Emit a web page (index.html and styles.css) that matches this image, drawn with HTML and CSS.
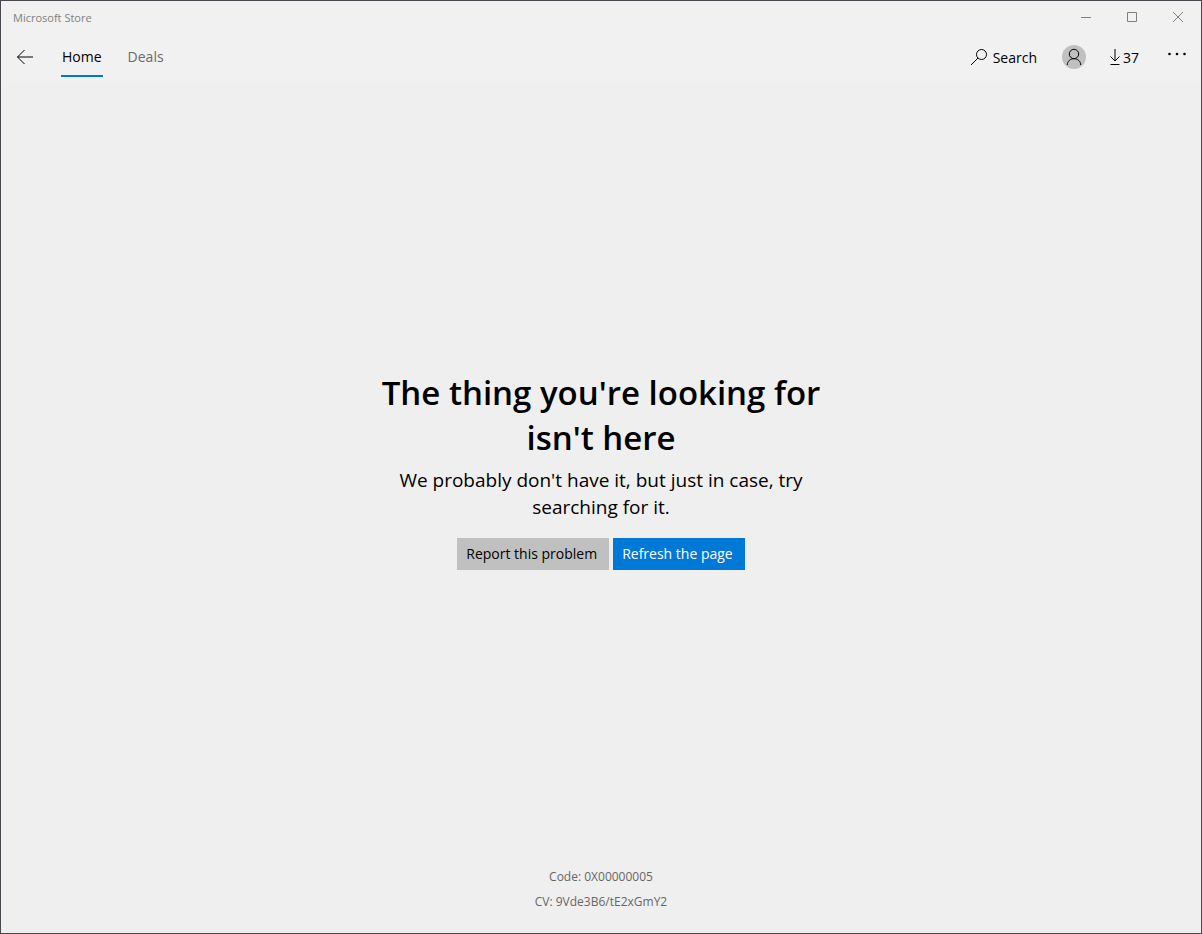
FILE: index.html
```html
<!DOCTYPE html>
<html lang="en">
<head>
<meta charset="utf-8">
<meta name="viewport" content="width=device-width, initial-scale=1">
<title>Microsoft Store</title>
<link rel="stylesheet" href="styles.css">
</head>
<body>
<div class="window">
  <header class="chrome">
    <div class="titlebar">
      <span class="app-name">Microsoft Store</span>
      <div class="window-controls">
        <button class="window-button" type="button" aria-label="Minimize">
          <svg width="12" height="12" viewBox="0 0 12 12"><path d="M1 6.500H11"/></svg>
        </button>
        <button class="window-button" type="button" aria-label="Maximize">
          <svg width="12" height="12" viewBox="0 0 12 12"><path d="M1.500 1.500H10.500V10.500H1.500Z"/></svg>
        </button>
        <button class="window-button" type="button" aria-label="Close">
          <svg width="12" height="12" viewBox="0 0 12 12"><path d="M1 1L11 11M11 1L1 11"/></svg>
        </button>
      </div>
    </div>
    <div class="toolbar">
      <button class="back" type="button" aria-label="Back">
        <svg width="18" height="16" viewBox="0 0 18 16"><path d="M17 8H1.500M8.500 1L1.500 8L8.500 15"/></svg>
      </button>
      <nav class="tabs">
        <a class="tab tab-active" href="#home" aria-current="page">Home</a>
        <a class="tab" href="#deals">Deals</a>
      </nav>
      <div class="actions">
        <button class="action search" type="button">
          <svg width="18" height="18" viewBox="0 0 18 18"><circle cx="11.500" cy="6.500" r="5"/><path d="M8 10L1 17"/></svg>
          <span>Search</span>
        </button>
        <button class="action account" type="button" aria-label="Account">
          <svg width="24" height="24" viewBox="0 0 24 24"><circle class="avatar" cx="12" cy="12" r="12"/><circle cx="12" cy="9" r="4.700"/><path d="M5.300 20C5.300 16.300 8.300 13.700 12 13.700S18.700 16.300 18.700 20"/></svg>
        </button>
        <button class="action downloads" type="button" aria-label="37 downloads">
          <svg width="12" height="18" viewBox="0 0 12 18"><path d="M6 1V13M1.500 8.500L6 13L10.500 8.500M1.500 16.500H10.500"/></svg>
          <span>37</span>
        </button>
        <button class="action more" type="button" aria-label="More">
          <svg width="20" height="10" viewBox="0 0 20 10"><circle cx="2.500" cy="2" r="1.300"/><circle cx="10" cy="2" r="1.300"/><circle cx="17.500" cy="2" r="1.300"/></svg>
        </button>
      </div>
    </div>
  </header>
  <main class="message">
    <h1 class="headline">The thing you're looking for isn't here</h1>
    <p class="hint">We probably don't have it, but just in case, try searching for it.</p>
    <div class="buttons">
      <button class="button" type="button">Report this problem</button>
      <button class="button button-primary" type="button">Refresh the page</button>
    </div>
  </main>
  <footer class="details">
    <p>Code: 0X00000005</p>
    <p>CV: 9Vde3B6/tE2xGmY2</p>
  </footer>
</div>
</body>
</html>
```
FILE: styles.css
```css
* {
  box-sizing: border-box;
}

body {
  margin: 0;
  font-family: "Open Sans", "Noto Sans", sans-serif;
  color: #000;
}

h1,
p {
  margin: 0;
}

button {
  padding: 0;
  border: 0;
  background: none;
  color: inherit;
  font: inherit;
}

svg {
  display: block;
  fill: none;
  stroke: currentColor;
}

.window {
  display: flex;
  flex-direction: column;
  min-height: 100vh;
  border: 1px solid #4b484f;
  background: #efefef;
}

.chrome {
  background: #f1f1f1;
}

.titlebar {
  display: flex;
  justify-content: space-between;
  height: 32px;
  color: #808080;
}

.app-name {
  padding-left: 12px;
  font-size: 11px;
  line-height: 34px;
}

.window-controls {
  display: flex;
}

.window-button {
  display: grid;
  place-items: center;
  width: 46px;
}

.toolbar {
  display: flex;
  height: 48px;
  font-size: 14px;
}

.back {
  display: grid;
  place-items: center;
  width: 48px;
}

.tabs {
  display: flex;
  gap: 24px;
  padding-left: 12px;
}

.tab {
  height: 44px;
  padding: 0 1px;
  border-bottom: 2px solid transparent;
  color: #6a6a6a;
  line-height: 48px;
  text-decoration: none;
}

.tab-active {
  border-color: #0078d7;
  color: #000;
}

.actions {
  display: flex;
  margin-left: auto;
}

.action {
  display: flex;
  align-items: center;
  justify-content: center;
}

.search {
  gap: 5px;
  padding: 0 12px;
}

.account {
  width: 50px;
}

.avatar {
  fill: #c0c0c0;
  stroke: none;
}

.downloads {
  gap: 2px;
  width: 50px;
}

.more {
  width: 52px;
  padding-left: 4px;
}

.more svg {
  fill: currentColor;
  stroke: none;
}

.message {
  display: flex;
  flex: 1;
  flex-direction: column;
  align-items: center;
  justify-content: center;
  padding-bottom: 6px;
  text-align: center;
}

.headline {
  max-width: 456px;
  font-size: 33px;
  font-weight: 600;
  line-height: 45px;
}

.hint {
  max-width: 432px;
  margin-top: 7px;
  font-size: 19px;
  line-height: 27px;
}

.buttons {
  display: flex;
  gap: 4px;
  margin-top: 17px;
}

.button {
  height: 32px;
  padding: 0 12px 0 9px;
  background: #c0c0c0;
  font-size: 14px;
}

.button-primary {
  background: #0078d7;
  color: #fff;
}

.details {
  padding-bottom: 19px;
  color: #666;
  font-size: 12px;
  line-height: 25px;
  text-align: center;
}
```
